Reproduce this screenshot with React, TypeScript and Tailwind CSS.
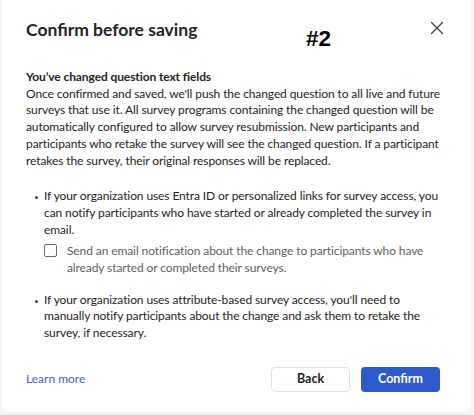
import { X } from "lucide-react";

const font = { fontFamily: 'Lato, "Open Sans", sans-serif' };

export default function App() {
  return (
    <div className="w-[474px] h-[415px] bg-[#f4f4f4] pl-[2px] pr-[3px] pb-[3px]" style={font}>
      <div className="relative h-full bg-white rounded-b-[6px] px-6 pt-[18px] text-[#242424]">
        <div className="flex items-start justify-between">
          <h2 className="text-[17.5px] leading-6 font-bold">Confirm before saving</h2>
          <button className="-mt-[1.5px] -mr-[1px] text-[#424242]">
            <X className="w-[22px] h-[22px]" strokeWidth={1.4} />
          </button>
        </div>

        <span
          className="absolute left-[304px] top-[27px] text-[22.5px] leading-6 font-bold text-black"
          style={{ fontFamily: '"Liberation Sans", Arial, sans-serif' }}
        >
          #2
        </span>

        <div className="mt-[27px] text-[12px] leading-[16.7px] tracking-[-0.1px]">
          <p className="font-bold">You’ve changed question text fields</p>
          <p>
            Once confirmed and saved, we'll push the changed question to all live and future surveys that use it. All
            survey programs containing the changed question will be automatically configured to allow survey
            resubmission. New participants and participants who retake the survey will see the changed question. If a
            participant retakes the survey, their original responses will be replaced.
          </p>

          <ul className="mt-[19px]">
            <li className="flex">
              <span className="w-[18px] shrink-0 pl-[9px] pt-[8px]">
                <span className="block w-[3px] h-[3px] rounded-full bg-[#444]" />
              </span>
              <span className="flex-1">
                If your organization uses Entra ID or personalized links for survey access, you can notify participants
                who have started or already completed the survey in email.
              </span>
            </li>
            <li className="flex mt-[5px] pl-[18px]">
              <label className="flex gap-[10px] text-[#616161]">
                <span className="mt-[1px] w-[13px] h-[13px] shrink-0 rounded-[2px] border border-[#6b6b6b] bg-white" />
                <span>
                  Send an email notification about the change to participants who have already started or completed
                  their surveys.
                </span>
              </label>
            </li>
            <li className="flex mt-[15px]">
              <span className="w-[18px] shrink-0 pl-[9px] pt-[8px]">
                <span className="block w-[3px] h-[3px] rounded-full bg-[#444]" />
              </span>
              <span className="flex-1">
                If your organization uses attribute-based survey access, you'll need to manually notify participants
                about the change and ask them to retake the survey, if necessary.
              </span>
            </li>
          </ul>
        </div>

        <div className="mt-[25px] flex items-center justify-between pr-[7px]">
          <a className="text-[12px] text-[#4463c0]">Learn more</a>
          <div className="flex gap-[11px]">
            <button className="w-[79px] h-[25px] rounded-[4px] border border-[#e1e1e1] bg-white text-[12.5px] font-bold text-[#242424]">
              Back
            </button>
            <button className="w-[79px] h-[25px] rounded-[4px] bg-[#2d5acb] text-[12.5px] font-bold text-white">
              Confirm
            </button>
          </div>
        </div>
      </div>
    </div>
  );
}
